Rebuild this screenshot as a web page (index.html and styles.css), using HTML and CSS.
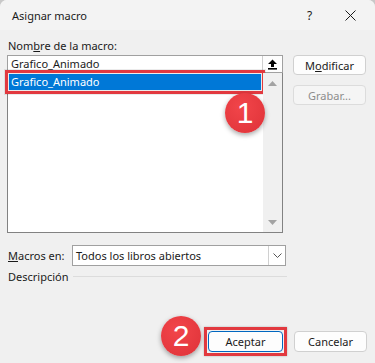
FILE: index.html
```html
<!DOCTYPE html>
<html lang="es">
<head>
    <meta charset="UTF-8">
    <meta name="viewport" content="width=device-width, initial-scale=1.0">
    <title>Asignar macro</title>
    <link rel="stylesheet" href="styles.css">
</head>
<body>

<div class="dialog">
    <div class="titlebar">
        <span class="title">Asignar macro</span>
        <span class="help">?</span>
        <span class="close">
            <svg width="11" height="11" viewBox="0 0 11 11"><path d="M0.5 0.5 L10.5 10.5 M10.5 0.5 L0.5 10.5" stroke="#1a1a1a" stroke-width="1"/></svg>
        </span>
    </div>

    <div class="content">
        <div class="main">
            <div class="left">
                <div class="label">Nom<u>b</u>re de la macro:</div>
                <div class="name-input">
                    <span class="name-text">Grafico_Animado</span>
                    <span class="ref-btn">
                        <svg width="11" height="11" viewBox="0 0 11 11"><path d="M5.5 0.5 L10 5 L7 5 L7 8 L4 8 L4 5 L1 5 Z" fill="#000"/><rect x="1" y="9" width="9" height="1.6" fill="#000"/></svg>
                    </span>
                </div>
                <div class="listbox">
                    <div class="items">
                        <div class="item selected">Grafico_Animado</div>
                    </div>
                    <div class="scrollbar">
                        <svg width="9" height="5" viewBox="0 0 9 5"><path d="M4.5 0 L9 5 L0 5 Z" fill="#a3a3a3"/></svg>
                        <svg width="9" height="5" viewBox="0 0 9 5"><path d="M0 0 L9 0 L4.5 5 Z" fill="#a3a3a3"/></svg>
                    </div>
                </div>
            </div>
            <div class="side">
                <button class="btn">M<u>o</u>dificar</button>
                <button class="btn" disabled>Grabar...</button>
            </div>
        </div>

        <div class="macros-row">
            <span class="macros-label"><u>M</u>acros en:</span>
            <div class="select">
                <span class="select-text">Todos los libros abiertos</span>
                <span class="drop">
                    <svg width="9" height="5" viewBox="0 0 9 5"><path d="M0.5 0.5 L4.5 4.5 L8.5 0.5" fill="none" stroke="#555" stroke-width="1"/></svg>
                </span>
            </div>
        </div>

        <div class="desc">
            <span>Descripción</span>
            <span class="desc-line"></span>
        </div>

        <div class="footer">
            <span class="highlight"><button class="btn btn-default">Aceptar</button></span>
            <button class="btn">Cancelar</button>
        </div>
    </div>

    <div class="badge badge-one">1</div>
    <div class="badge badge-two">2</div>
</div>

</body>
</html>
```

FILE: styles.css
```css
/* Page */
body {
    margin: 0;
    padding: 0;
    background-color: #c8c8c8;
    font-family: 'Noto Sans', 'Liberation Sans', sans-serif;
    font-size: 11px;
    color: #1a1a1a;
}

/* Dialog window */
.dialog {
    position: relative;
    width: 375px;
    height: 363px;
    background-color: #f0f0f0;
    border-radius: 7px 7px 0 0;
    overflow: hidden;
}

.titlebar {
    display: flex;
    align-items: center;
    height: 30px;
    padding-left: 12px;
    background-color: #f3f3f3;
}

.title {
    flex: 1;
    font-size: 11px;
}

.help {
    width: 38px;
    font-size: 12px;
}

.close {
    display: flex;
    width: 30px;
}

.close svg {
    display: block;
}

/* Content */
.content {
    padding: 6px 8px 0 7px;
}

.main {
    display: flex;
}

.left {
    width: 276px;
}

.label {
    height: 19px;
    line-height: 19px;
    padding-left: 1px;
}

.name-input {
    display: flex;
    align-items: center;
    justify-content: space-between;
    height: 16px;
    border: 1px solid #a0a0a0;
    background-color: #fff;
    padding-left: 3px;
}

.name-text {
    line-height: 16px;
}

.ref-btn {
    display: flex;
    align-items: center;
    justify-content: center;
    width: 18px;
    height: 16px;
    border-left: 1px solid #cfcfcf;
    margin-right: 1px;
    background-color: #fdfdfd;
}

.listbox {
    display: flex;
    height: 159px;
    border: 1px solid #828282;
    border-top: none;
    background-color: #fff;
}

.items {
    flex: 1;
    padding: 1px 2px 0 1px;
}

.item {
    height: 16px;
    line-height: 16px;
    padding-left: 2px;
}

.item.selected {
    background-color: #0078d7;
    color: #fff;
    outline: 3px solid #e2393f;
    outline-offset: 1px;
    box-shadow: 0 0 0 5px rgba(0, 0, 0, 0.08);
}

.scrollbar {
    display: flex;
    flex-direction: column;
    align-items: center;
    justify-content: space-between;
    width: 19px;
    padding: 8px 0 7px 0;
    background-color: #f0f0f0;
}

.scrollbar svg {
    display: block;
}

/* Side buttons */
.side {
    display: flex;
    flex-direction: column;
    gap: 10px;
    margin-left: 10px;
    padding-top: 19px;
}

.btn {
    width: 73px;
    height: 21px;
    padding: 0;
    font-family: inherit;
    font-size: 11px;
    color: #1a1a1a;
    background-color: #fdfdfd;
    border: 1px solid #d0d0d0;
    border-radius: 4px;
}

.side .btn {
    height: 20px;
}

.btn:disabled {
    color: #8c8c8c;
    background-color: #f5f5f5;
    border-color: #dcdcdc;
}

/* Macros en */
.macros-row {
    display: flex;
    align-items: center;
    margin-top: 12px;
    padding-left: 1px;
}

.macros-label {
    width: 64px;
}

.select {
    display: flex;
    align-items: center;
    justify-content: space-between;
    width: 209px;
    height: 19px;
    border: 1px solid #a0a0a0;
    background-color: #fff;
    padding-left: 3px;
}

.drop {
    display: flex;
    align-items: center;
    justify-content: center;
    width: 16px;
    height: 19px;
    border-left: 1px solid #d0d0d0;
}

/* Descripcion */
.desc {
    display: flex;
    align-items: center;
    height: 17px;
    margin-top: 2px;
    padding-left: 1px;
}

.desc-line {
    flex: 1;
    height: 1px;
    margin-left: 4px;
    max-width: 214px;
    background-color: #dcdcdc;
}

/* Footer */
.footer {
    display: flex;
    justify-content: flex-end;
    align-items: center;
    gap: 7px;
    margin-top: 42px;
}

.highlight {
    display: flex;
    padding: 1px;
    border: 3px solid #e2393f;
    box-shadow: 0 0 2px rgba(0, 0, 0, 0.25);
}

.btn-default {
    width: 75px;
    border: 1px solid #0067c0;
}

/* Step badges */
.badge {
    position: absolute;
    width: 40px;
    height: 40px;
    border-radius: 50%;
    background: radial-gradient(circle at 40% 35%, #f2454a, #de3238);
    box-shadow: 0 2px 5px rgba(0, 0, 0, 0.35);
    color: #fff;
    font-family: 'Liberation Sans', 'Noto Sans', sans-serif;
    font-size: 30px;
    line-height: 40px;
    text-align: center;
}

.badge-one {
    left: 225px;
    top: 93px;
}

.badge-two {
    left: 161px;
    top: 316px;
}
```
